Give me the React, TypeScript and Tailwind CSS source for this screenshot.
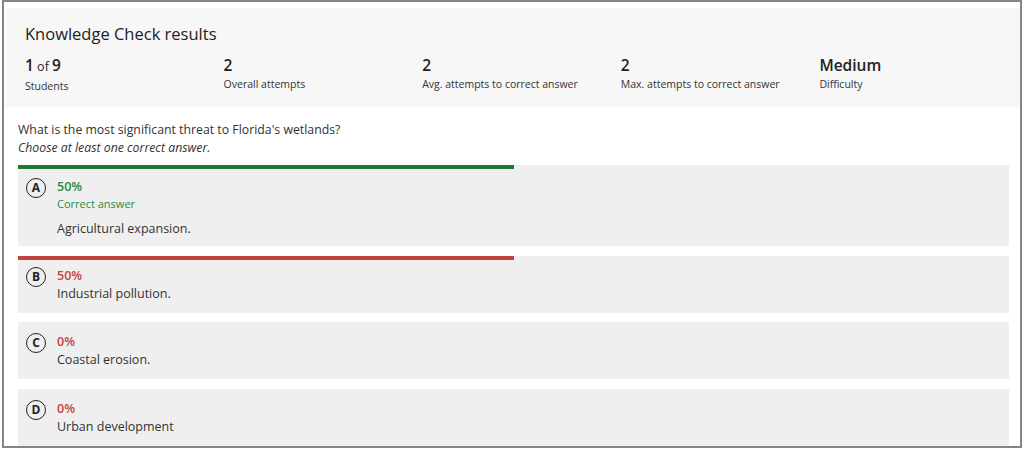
const font = { fontFamily: '"Open Sans", "Noto Sans", sans-serif' };

type Answer = {
  letter: string;
  percent: number;
  text: string;
  correct?: boolean;
};

const stats = [
  { value: "1", suffix: "9", label: "Students" },
  { value: "2", label: "Overall attempts" },
  { value: "2", label: "Avg. attempts to correct answer" },
  { value: "2", label: "Max. attempts to correct answer" },
  { value: "Medium", label: "Difficulty" },
];

const answers: Answer[] = [
  { letter: "A", percent: 50, text: "Agricultural expansion.", correct: true },
  { letter: "B", percent: 50, text: "Industrial pollution." },
  { letter: "C", percent: 0, text: "Coastal erosion." },
  { letter: "D", percent: 0, text: "Urban development" },
];

export default function App() {
  return (
    <div className="h-[451px] w-[1024px] overflow-hidden bg-white text-[#333]" style={font}>
      <div className="ml-[2px] h-[448px] w-[1020px] overflow-hidden border-2 border-[#858585]">
        <header className="ml-px mt-[6px] h-[99px] bg-[#f7f7f7] pl-[20px] pr-[2px] pt-[14px]">
          <h1 className="text-[16.5px] leading-[24px] text-[#222]">Knowledge Check results</h1>
          <div className="mt-[8px] grid grid-cols-5">
            {stats.map((s) => (
              <div key={s.label}>
                <div className="text-[15.5px] font-semibold leading-[22px] text-[#222]">
                  {s.value}
                  {s.suffix ? (
                    <>
                      <span className="text-[12.5px] font-normal"> of </span>
                      {s.suffix}
                    </>
                  ) : null}
                </div>
                <div className="text-[10.5px] leading-[16px] text-[#333]">{s.label}</div>
              </div>
            ))}
          </div>
        </header>

        <section className="pl-[14px] pr-[11px] pt-[14px]">
          <p className="text-[12.3px] leading-[18px]">What is the most significant threat to Florida's wetlands?</p>
          <p className="text-[12.3px] italic leading-[18px]">Choose at least one correct answer.</p>
          <div className="mt-[8px] flex flex-col gap-[9.5px]">
            {answers.map((a) => (
              <AnswerRow key={a.letter} answer={a} />
            ))}
          </div>
        </section>
      </div>
    </div>
  );
}

function AnswerRow({ answer }: { answer: Answer }) {
  const green = answer.correct;
  return (
    <div className="bg-[#efefef]">
      <div
        className={green ? "h-[4px] bg-[#1d7a32]" : "h-[4px] bg-[#c2413c]"}
        style={{ width: `${answer.percent}%` }}
      />
      <div className={green ? "flex gap-[11px] pb-[8px] pl-[8px] pt-[9px]" : "flex gap-[11px] pb-[10px] pl-[8px] pt-[7px]"}>
        <div className="grid size-[20px] shrink-0 place-items-center rounded-full border-[1.5px] border-[#222] text-[12px] font-bold leading-none text-[#222]">
          {answer.letter}
        </div>
        <div>
          <div
            className={
              green
                ? "text-[12.5px] font-semibold leading-[18px] text-[#2a8a3c]"
                : "text-[12.5px] font-semibold leading-[18px] text-[#c4423d]"
            }
          >
            {answer.percent}%
          </div>
          {green ? (
            <>
              <div className="text-[11px] leading-[16px] text-[#2a8a3c]">Correct answer</div>
              <div className="mt-[8px] text-[12.5px] leading-[18px]">{answer.text}</div>
            </>
          ) : (
            <div className="text-[12.5px] leading-[18px]">{answer.text}</div>
          )}
        </div>
      </div>
    </div>
  );
}
